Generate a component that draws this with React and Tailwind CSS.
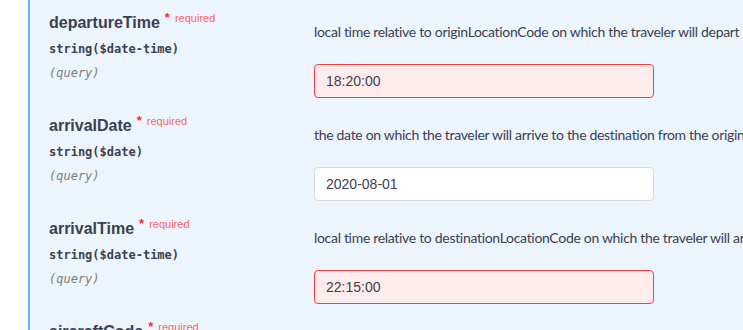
const params = [
  {
    name: 'departureTime',
    type: 'string($date-time)',
    description: 'local time relative to originLocationCode on which the traveler will depart',
    value: '18:20:00',
    invalid: true,
  },
  {
    name: 'arrivalDate',
    type: 'string($date)',
    description: 'the date on which the traveler will arrive to the destination from the origin',
    value: '2020-08-01',
    invalid: false,
  },
  {
    name: 'arrivalTime',
    type: 'string($date-time)',
    description: 'local time relative to destinationLocationCode on which the traveler will arrive',
    value: '22:15:00',
    invalid: true,
  },
  {
    name: 'aircraftCode',
    type: 'string',
    description: 'IATA aircraft code',
    value: '321',
    invalid: false,
  },
]

function ParamRow({ name, type, description, value, invalid }) {
  return (
    <div className="flex h-[103px] shrink-0">
      {/* name column */}
      <div className="w-[265px] shrink-0 pt-[11px]">
        <div className="whitespace-nowrap text-[16px] font-bold leading-5 text-[#3b4151] font-['Liberation_Sans',sans-serif]">
          {name}
          <span className="ml-[5px] align-super text-[13px] font-bold leading-none text-[#ff2a2a]">*</span>
          <span className="ml-[5px] align-super text-[11px] font-normal leading-none text-[#fc6366]">required</span>
        </div>
        <div className="mt-[8px] text-[12px] font-bold leading-4 text-[#3b4151] font-['DejaVu_Sans_Mono',monospace]">
          {type}
        </div>
        <div className="mt-[8px] text-[12px] italic leading-4 text-[#808080] font-['DejaVu_Sans_Mono',monospace]">
          (query)
        </div>
      </div>

      {/* description column */}
      <div className="min-w-0 flex-1 overflow-hidden pt-[22px]">
        <div className="whitespace-nowrap text-[14px] leading-5 tracking-[-0.31px] text-[#3b4151] font-['Lato',sans-serif]">
          {description}
        </div>
        <div
          className={
            invalid
              ? 'mt-[22px] flex h-[34px] w-[340px] items-center rounded-[4px] border border-[#f93e3e] bg-[#feebeb] px-[11px] text-[14px] text-[#3b4151] font-["Liberation_Sans",sans-serif]'
              : 'mt-[22px] flex h-[34px] w-[340px] items-center rounded-[4px] border border-[#d9d9d9] bg-white px-[11px] text-[14px] text-[#3b4151] font-["Liberation_Sans",sans-serif]'
          }
        >
          {value}
        </div>
      </div>
    </div>
  )
}

export default function App() {
  return (
    <div className="flex h-[330px] w-[743px] overflow-hidden bg-white">
      <div className="w-[28px] shrink-0" />
      <div className="flex min-w-0 flex-1 flex-col border-l-2 border-[#61affe] bg-[#ecf4fe] pl-[19px]">
        {params.map((p) => (
          <ParamRow key={p.name} {...p} />
        ))}
      </div>
    </div>
  )
}
